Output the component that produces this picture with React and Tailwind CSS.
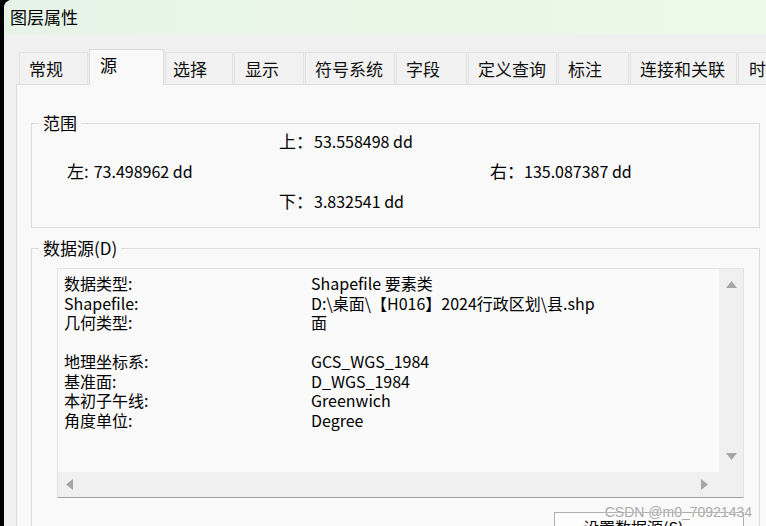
import React from 'react';

const tabs = [
  { label: '常规', w: 'w-[69px]', pl: 'pl-[9px]' },
  { label: '源', w: 'w-[75px]', pl: 'pl-[10px]', active: true },
  { label: '选择', w: 'w-[68px]', pl: 'pl-[7px]' },
  { label: '显示', w: 'w-[70px]', pl: 'pl-[10px]' },
  { label: '符号系统', w: 'w-[90px]', pl: 'pl-[9px]' },
  { label: '字段', w: 'w-[71px]', pl: 'pl-[9px]' },
  { label: '定义查询', w: 'w-[89px]', pl: 'pl-[9px]' },
  { label: '标注', w: 'w-[71px]', pl: 'pl-[9px]' },
  { label: '连接和关联', w: 'w-[107px]', pl: 'pl-[9px]' },
  { label: '时', w: 'w-[60px]', pl: 'pl-[10px]' },
];

const rows = [
  ['数据类型:', 'Shapefile 要素类'],
  ['Shapefile:', 'D:\\桌面\\【H016】2024行政区划\\县.shp'],
  ['几何类型:', '面'],
  ['', ''],
  ['地理坐标系:', 'GCS_WGS_1984'],
  ['基准面:', 'D_WGS_1984'],
  ['本初子午线:', 'Greenwich'],
  ['角度单位:', 'Degree'],
];

function Arrow({ dir }) {
  const pts = {
    up: '0,7 5.5,0 11,7',
    down: '0,0 11,0 5.5,7',
    left: '7,0 7,11 0,5.5',
    right: '0,0 0,11 7,5.5',
  }[dir];
  const vertical = dir === 'up' || dir === 'down';
  return (
    <svg width={vertical ? 11 : 7} height={vertical ? 7 : 11} viewBox={vertical ? '0 0 11 7' : '0 0 7 11'}>
      <polygon points={pts} fill="#a6a6a6" />
    </svg>
  );
}

export default function App() {
  return (
    <div className="w-[766px] h-[526px] overflow-hidden bg-black pl-[4px] font-['Noto_Sans_CJK_SC',sans-serif] text-black relative">
      <div className="h-full flex flex-col bg-[#f0f0f0] rounded-tl-[8px] overflow-hidden">
        {/* Title bar */}
        <div className="h-[34px] shrink-0 bg-gradient-to-r from-[#e6f4e7] to-[#ecf9e6] flex items-center pl-[6px] text-[17px]">
          图层属性
        </div>

        <div className="flex-1 flex flex-col pl-[12px] min-h-0">
          {/* Tabs */}
          <div className="flex items-end gap-[1px] pl-[3px] mt-[15px] h-[36px] shrink-0 relative z-10 -mb-px">
            {tabs.map((t) =>
              t.active ? (
                <div
                  key={t.label}
                  className={`${t.w} ${t.pl} shrink-0 h-[36px] bg-[#f9f9f9] border border-b-0 border-[#dcdcdc] text-[17px] leading-[30px]`}
                >
                  {t.label}
                </div>
              ) : (
                <div
                  key={t.label}
                  className={`${t.w} ${t.pl} shrink-0 h-[33px] bg-[#f2f2f2] border border-[#e2e2e2] border-b-[#dcdcdc] text-[17px] leading-[31px] text-[#111]`}
                >
                  {t.label}
                </div>
              )
            )}
          </div>

          {/* Panel */}
          <div className="flex-1 bg-[#f9f9f9] border-l border-t border-[#dcdcdc] pl-[14px] pt-[28px]">
            <fieldset className="w-[729px] border border-[#dcdcdc] pb-[11px]">
              <legend className="ml-[7px] px-[4px] text-[17px] leading-[20px]">范围</legend>
              <div className="-mt-[7px] text-[16px] leading-[30px]">
                <div className="pl-[247px]">
                  <span className="text-[17px]">上：</span>
                  <span className="ml-[1px]">53.558498 dd</span>
                </div>
                <div className="flex">
                  <div className="pl-[35px] w-[458px]">
                    <span className="text-[17px]">左:</span>
                    <span className="ml-[5px]">73.498962 dd</span>
                  </div>
                  <div>
                    <span className="text-[17px]">右：</span>
                    <span>135.087387 dd</span>
                  </div>
                </div>
                <div className="pl-[247px]">
                  <span className="text-[17px]">下：</span>
                  <span className="ml-[1px]">3.832541 dd</span>
                </div>
              </div>
            </fieldset>

            <fieldset className="w-[729px] mt-[10px] border border-[#dcdcdc] pb-[20px]">
              <legend className="ml-[7px] px-[4px] text-[17px] leading-[20px]">数据源(D)</legend>
              <div className="ml-[25px] mr-[15px] mt-[10px] h-[230px] border border-[#e3e3e3] border-b-[#a0a0a0] bg-[#fafafa] flex flex-col">
                <div className="flex flex-1 min-h-0">
                  <div className="flex-1 pl-[6px] pt-[5px] text-[16px] leading-[19.5px]">
                    {rows.map(([k, v], i) => (
                      <div key={i} className="flex h-[19.5px]">
                        <div className="w-[247px]">{k}</div>
                        <div className="whitespace-nowrap">{v}</div>
                      </div>
                    ))}
                  </div>
                  <div className="w-[24px] bg-[#f0f0f0] flex flex-col items-center justify-between py-[12px]">
                    <Arrow dir="up" />
                    <Arrow dir="down" />
                  </div>
                </div>
                <div className="h-[25px] bg-[#f0f0f0] flex items-center">
                  <div className="flex-1 flex items-center justify-between pl-[8px] pr-[11px]">
                    <Arrow dir="left" />
                    <Arrow dir="right" />
                  </div>
                  <div className="w-[24px]" />
                </div>
              </div>
              <div className="flex justify-end mr-[15px] mt-[14px]">
                <button className="w-[190px] h-[30px] border border-[#adadad] bg-[#fdfdfd] text-[16px] leading-[26px] pl-[28px] text-left">
                  设置数据源(S)...
                </button>
              </div>
            </fieldset>
          </div>
        </div>
      </div>

      {/* Watermark */}
      <div className="absolute right-[14px] bottom-[6px] text-[14px] leading-[16px] text-[#a9a9a9] font-['Liberation_Sans',sans-serif] [text-shadow:0_0_2px_#ffffff]">
        CSDN @m0_70921434
      </div>
    </div>
  );
}
